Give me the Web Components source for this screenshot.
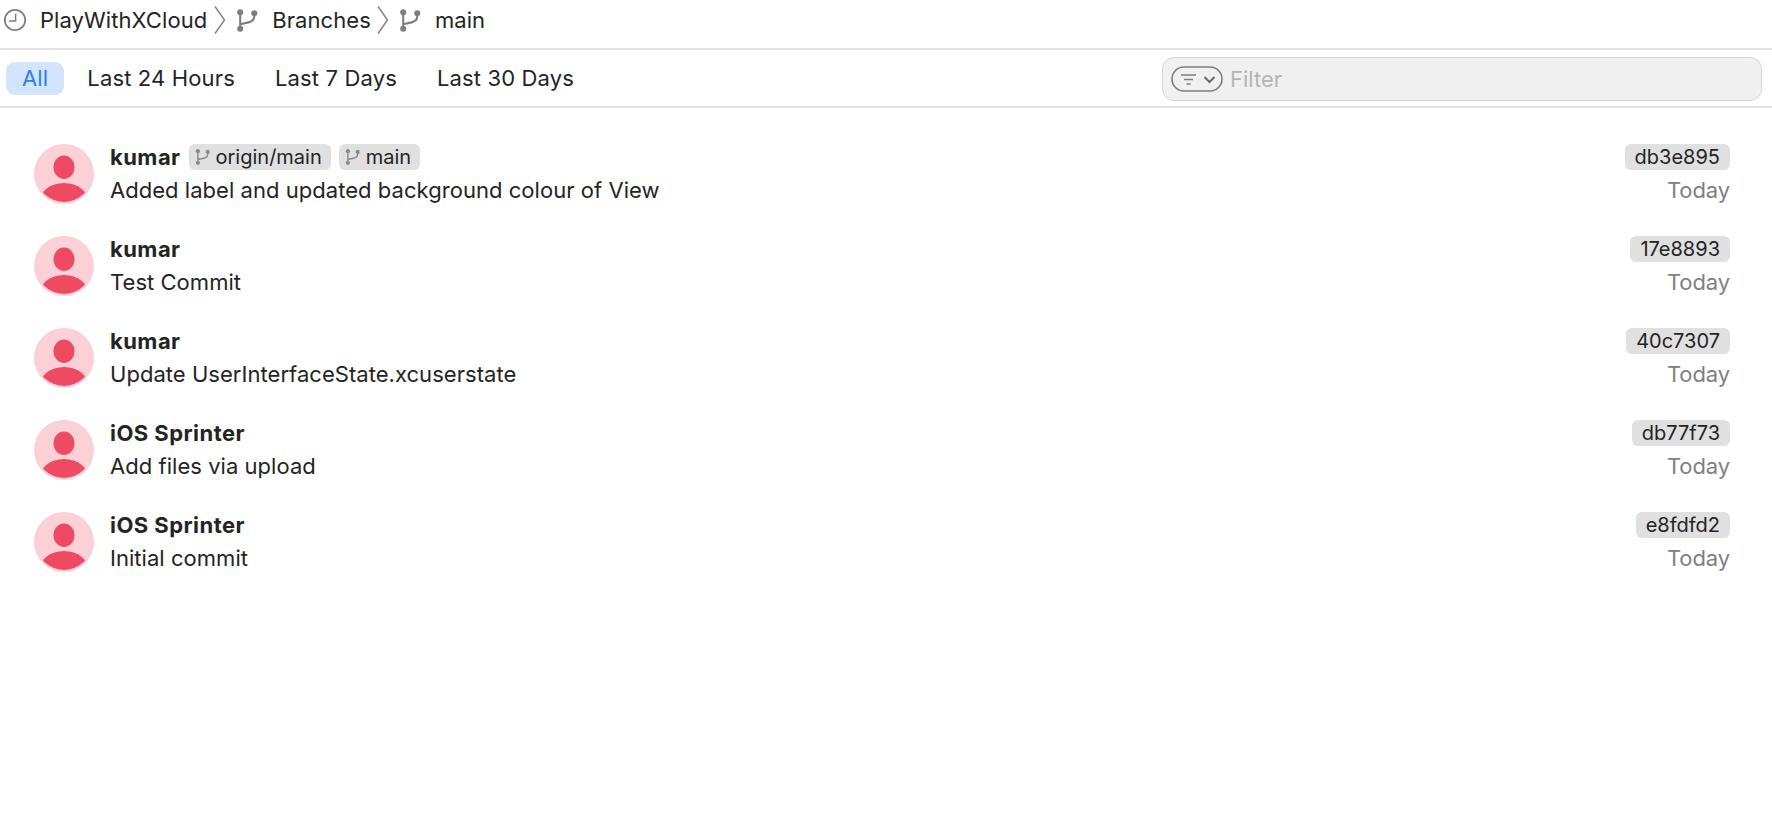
<!DOCTYPE html>
<html lang="en">
<head>
<meta charset="utf-8">
<title>Branches</title>
<style>
html,body{margin:0;padding:0;background:#fff}
body{width:1772px;height:834px;overflow:hidden;font-family:Inter,"Liberation Sans",sans-serif;color:#242424}
</style>
</head>
<body>
<x-app>
  <x-breadcrumbs></x-breadcrumbs>
  <x-scopebar></x-scopebar>
  <x-commits>
    <x-commit author="kumar" message="Added label and updated background colour of View" hash="db3e895" when="Today" refs="origin/main,main"></x-commit>
    <x-commit author="kumar" message="Test Commit" hash="17e8893" when="Today"></x-commit>
    <x-commit author="kumar" message="Update UserInterfaceState.xcuserstate" hash="40c7307" when="Today"></x-commit>
    <x-commit author="iOS Sprinter" message="Add files via upload" hash="db77f73" when="Today"></x-commit>
    <x-commit author="iOS Sprinter" message="Initial commit" hash="e8fdfd2" when="Today"></x-commit>
  </x-commits>
</x-app>
<script>
function def(name, css, html){
  customElements.define(name, class extends HTMLElement{
    constructor(){super();this.attachShadow({mode:'open'});}
    connectedCallback(){
      const h = typeof html==='function'?html(this):html;
      this.shadowRoot.innerHTML='<style>'+css+'</style>'+h;
    }
  });
}
def('x-branch-icon',
  ':host{display:inline-flex;color:#7d7d7d}svg{display:block;width:100%;height:100%}',
  '<svg viewBox="0 0 22 24" fill="none"><path d="M4 4V20M4 15.500L12 13.800C15.500 13 17.500 11.500 17.500 8V5" stroke="currentColor" stroke-width="2"/><circle cx="4" cy="4" r="2.900" fill="currentColor"/><circle cx="4" cy="20" r="2.900" fill="currentColor"/><circle cx="17.500" cy="5" r="2.900" fill="currentColor"/></svg>');
def('x-app',':host{display:block}','<slot></slot>');
def('x-breadcrumbs',
  ':host{display:flex;align-items:center;height:40px;padding-bottom:8px;border-bottom:2px solid #e3e3e3;font-size:22px;letter-spacing:.07px;color:#242424}'+
  '.clock{width:24px;height:24px;margin-left:3px;margin-right:13px;display:block}'+
  '.chev{width:13px;height:30px;margin:0 10px 0 6px;display:block}'+
  '.chev.second{margin:0 10px 0 5px}'+
  'x-branch-icon{width:23px;height:25px;margin-right:13px}',
  '<svg class="clock" viewBox="0 0 24 24" fill="none"><circle cx="12" cy="12" r="10.200" stroke="#808080" stroke-width="1.800"/><path d="M12.600 5.500V13H6" stroke="#808080" stroke-width="1.500"/></svg>'+
  '<span>PlayWithXCloud</span>'+
  '<svg class="chev" viewBox="0 0 13 30" fill="none"><path d="M2 1.500L11.500 15L2 28.500" stroke="#808080" stroke-width="1.400"/></svg>'+
  '<x-branch-icon></x-branch-icon><span>Branches</span>'+
  '<svg class="chev second" viewBox="0 0 13 30" fill="none"><path d="M2 1.500L11.500 15L2 28.500" stroke="#808080" stroke-width="1.400"/></svg>'+
  '<x-branch-icon></x-branch-icon><span>main</span>');
def('x-scopebar',
  ':host{display:flex;align-items:center;height:56px;border-bottom:2px solid #e3e3e3;padding:0 10px 0 6px;font-size:22px;letter-spacing:.15px;color:#242424}'+
  '.tab{height:33px;display:flex;align-items:center;padding:0 10px;border-radius:9px;margin-right:20px}'+
  '.on{background:#d3e5fc;color:#2f7cf6;margin-right:13px;padding:0 16px}'+
  'x-filter{margin-left:auto;letter-spacing:0}',
  '<span class="tab on">All</span><span class="tab">Last 24 Hours</span><span class="tab">Last 7 Days</span><span class="tab">Last 30 Days</span><x-filter></x-filter>');
def('x-filter',
  ':host{display:flex;align-items:center;box-sizing:border-box;width:600px;height:44px;margin-top:1px;background:#f0f0f0;border:1px solid #d6d6d6;border-radius:12px;padding-left:8px;font-size:22px;color:#b5b5b5}'+
  'svg{width:52px;height:26px;margin-right:7px;display:block}',
  '<svg viewBox="0 0 52 26" fill="none"><rect x="1" y="1" width="50" height="24" rx="12" stroke="#7d7d7d" stroke-width="1.600"/><path d="M10 9H25M13 13.500H22M15.500 18H19.500" stroke="#7d7d7d" stroke-width="1.700"/><path d="M33.500 11L38.500 16L43.500 11" stroke="#6b6b6b" stroke-width="2.100"/></svg><span>Filter</span>');
def('x-commits',':host{display:flex;flex-direction:column;padding-top:19px}','<slot></slot>');
def('x-commit',
  ':host{display:flex;align-items:center;height:92px;box-sizing:border-box;padding:0 42px 0 34px;font-size:22px}'+
  '.avatar{width:60px;height:60px;flex:none;margin:2px 16px 0 0;display:block}'+
  '.main{flex:1;min-width:0;display:flex;flex-direction:column;gap:7px}'+
  '.top{display:flex;align-items:center;height:26px;gap:8px}'+
  '.name{font-weight:700;letter-spacing:.45px;color:#242424}'+
  '.msg{line-height:26px;letter-spacing:.04px;color:#242424}'+
  '.side{display:flex;flex-direction:column;align-items:flex-end;gap:7px}'+
  '.hash,.ref{background:#e0e0e0;border-radius:6px;height:26px;display:flex;align-items:center;font-size:20px;color:#242424}'+
  '.hash{padding:0 10px}.ref{padding:0 9px 0 6px;gap:5px}'+
  '.ref x-branch-icon{width:16px;height:18px;color:#8a8a8a}'+
  '.when{line-height:26px;color:#808080;letter-spacing:-.1px}',
  el=>{
    const refs=(el.getAttribute('refs')||'').split(',').filter(Boolean).map(r=>'<span class="ref"><x-branch-icon></x-branch-icon>'+r+'</span>').join('');
    return '<svg class="avatar" viewBox="0 0 60 60"><defs><clipPath id="c"><circle cx="30" cy="30" r="28"/></clipPath></defs><circle cx="30" cy="30" r="30" fill="#fbd0d7"/><ellipse cx="30" cy="23.300" rx="10.500" ry="11.700" fill="#ee4a62"/><g clip-path="url(#c)"><ellipse cx="30" cy="59" rx="24.800" ry="20" fill="#ee4a62"/></g></svg>'+
    '<div class="main"><div class="top"><span class="name">'+el.getAttribute('author')+'</span>'+refs+'</div><div class="msg">'+el.getAttribute('message')+'</div></div>'+
    '<div class="side"><span class="hash">'+el.getAttribute('hash')+'</span><span class="when">'+el.getAttribute('when')+'</span></div>';
  });
</script>
</body>
</html>
